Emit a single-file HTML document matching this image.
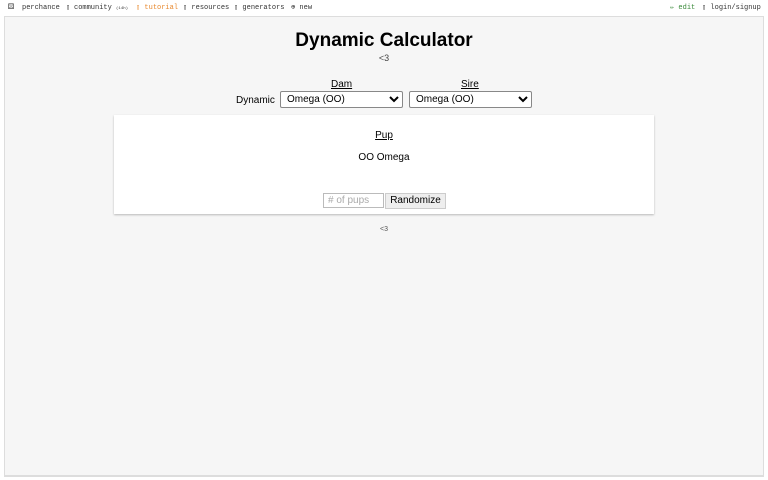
<!DOCTYPE html>
<html><head><meta charset="utf-8"><style>
html,body{margin:0;padding:0;width:768px;height:480px;background:#fff;overflow:hidden}
body{font-family:"Liberation Sans",sans-serif;color:#000}
.top{position:absolute;left:0;top:0;width:768px;height:16px;font-family:"Liberation Mono",monospace;font-size:7px;line-height:17px;color:#333}
.top span{position:absolute;top:0;white-space:nowrap}
.frame{position:absolute;left:4px;top:16px;width:758px;height:458px;background:#f6f6f6;border:1px solid #ddd;border-bottom:2px solid #ddd}
h1{position:absolute;left:0;width:768px;top:30px;margin:0;text-align:center;font-size:19px;font-weight:bold}
.c{position:absolute;left:0;width:768px;text-align:center}
select{position:absolute;height:17px;font-family:"Liberation Sans",sans-serif;font-size:10px;background:#fff;border:1px solid #888;border-radius:2px;padding:0 2px}
.card{position:absolute;left:114px;top:115px;width:540px;height:99px;background:#fff;box-shadow:0 1px 2px rgba(0,0,0,.25)}
</style></head><body>
<div class="top">
<span style="left:8px;font-size:10px;line-height:15px">⚄</span>
<span style="left:22px">perchance</span>
<span style="left:66px">▯</span>
<span style="left:74px">community <small style="font-size:4px">(14h)</small></span>
<span style="left:136px;color:#e8892f">▯ tutorial</span>
<span style="left:183px">▯ resources</span>
<span style="left:234px">▯ generators</span>
<span style="left:291px">⊕ new</span>
<span style="left:670px;color:#3a8a3a">✏ edit</span>
<span style="left:702px">▯ login/signup</span>
</div>
<div class="frame"></div>
<h1>Dynamic Calculator</h1>
<div class="c" style="top:53px;font-size:9px;color:#444">&lt;3</div>
<div style="position:absolute;left:331px;top:79px;font-size:10px;text-decoration:underline">Dam</div>
<div style="position:absolute;left:461px;top:79px;font-size:10px;text-decoration:underline">Sire</div>
<div style="position:absolute;left:236px;top:95px;font-size:10px">Dynamic</div>
<select style="left:280px;top:91px;width:123px"><option>Omega (OO)</option></select>
<select style="left:409px;top:91px;width:123px"><option>Omega (OO)</option></select>
<div class="card"></div>
<div class="c" style="top:130px;font-size:10px;text-decoration:underline">Pup</div>
<div class="c" style="top:152px;font-size:10px">OO Omega</div>
<div style="position:absolute;left:323px;top:193px;width:55px;height:13px;border:1px solid #bbb;font-size:10px;color:#aaa;line-height:13px;padding-left:4px;background:#fff">
# of pups</div>
<div style="position:absolute;left:385px;top:193px;width:59px;height:14px;border:1px solid #ccc;background:#eee;font-size:10px;line-height:14px;text-align:center">Randomize</div>
<div class="c" style="top:226px;font-size:7px;color:#555">&lt;3</div>
</body></html>
